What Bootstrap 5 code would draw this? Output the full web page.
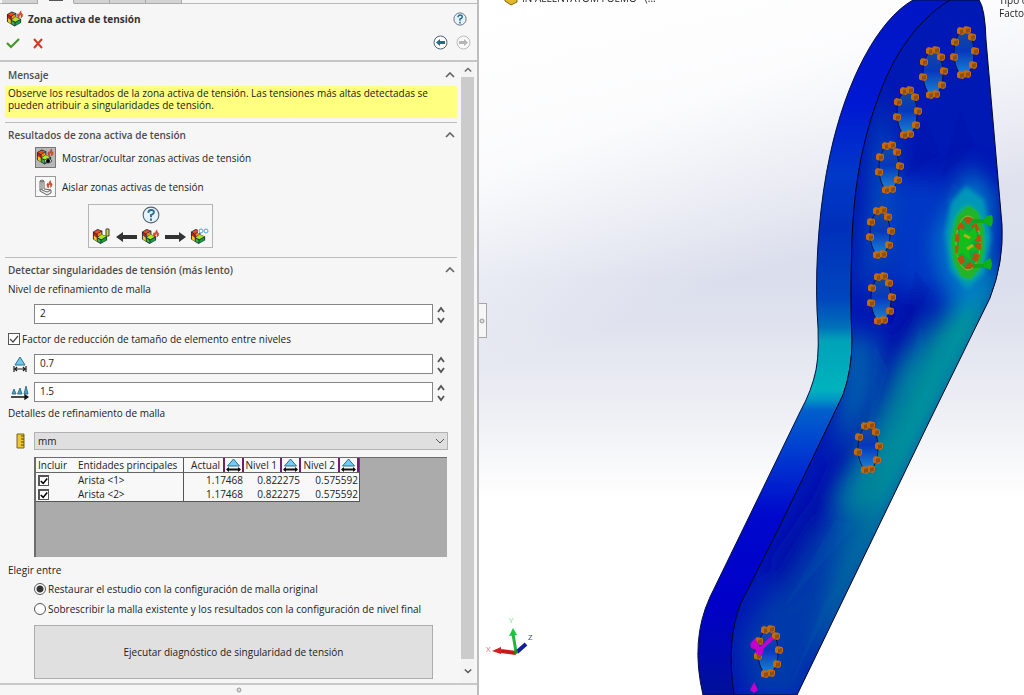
<!DOCTYPE html>
<html lang="es">
<head>
<meta charset="utf-8">
<meta name="viewport" content="width=device-width, initial-scale=1">
<title>Zona activa de tensión</title>
<link href="https://cdn.jsdelivr.net/npm/bootstrap@5.3.0/dist/css/bootstrap.min.css" rel="stylesheet">
<style>
body{font-family:"Open Sans","Noto Sans",sans-serif;font-size:10px;line-height:12px;color:#222;background:#f6f6f6}
.workspace{display:grid;grid-template-columns:minmax(0,479fr) minmax(0,545fr);height:100vh;min-height:695px;overflow:hidden}
.pm{background:#f6f6f6;border-right:2px solid #bdbdbd;min-width:0}
.tabstrip{height:4px;border-bottom:1px solid #b9b9b9;padding-left:2px}
.tabstrip span{width:36px;height:4px;background:#d3d3d3;border:solid #aaa;border-width:0 1px 1px 0}
.tabstrip span.sel{background:#f6f6f6;border-bottom-color:#f6f6f6}
.tabstrip span.sel::before{content:"";display:block;width:14px;height:1px;margin:0 auto;background:#555}
.pm-head{height:58px;border-bottom:2px solid #c6c6c6;padding:5px 2px 0 6px}
.pm-title{font-size:10px;line-height:20px;font-weight:700;margin:0;color:#333}
.pm-actions{padding-top:6px}
.bare{border:0;background:none;padding:0;line-height:0;display:inline-flex;align-items:center;justify-content:center}
.pm-body{flex:1 1 auto;min-height:0}
.pm-content{flex:1 1 auto;min-width:0;padding-left:5px}
.sec{border-top:1px solid #bcbcbc;padding:0 0 0 3px}
.sec.first{border-top:0}
.sec-title{height:24px;font-size:10px;line-height:12px;font-weight:600;color:#4c4c4c;margin:0;padding:0 2px 0 0}
.sec.first .sec-title{padding-top:2px}
.msg{background:#ffff80;margin:0 0 4px -3px;padding:1px 24px 7px 3px;color:#222}
.indent{padding-left:26px}
.tool{width:21px;height:21px;border:1px solid #999;background:#f9f9f9;margin:0 6px 0 1px}
.tool.on{background:#b7b7b7;border-color:#777}
.legendbox{width:125px;height:44px;border:1px solid #b5b5b5;margin:7px 0 9px 80px;padding:1px 3px 0}
.lbl{height:14px;line-height:14px}
.line{padding-right:9px}
.lead-ico{width:26px;flex:none;padding-right:2px}
.num{flex:1 1 auto;min-width:0;height:20px;border:1px solid #858585;border-radius:0;background:#fff;padding:0 5px 3px;font-size:10px;line-height:14px;color:#222}
.spin{width:14px;height:20px;flex:none;margin-left:1px}
.unit{height:18px;min-height:0;border:1px solid #b2b2b2;border-radius:0;background-color:#dfdfdf;padding:0 20px 0 3px;font-size:10px;line-height:15px;color:#222;
background-image:url("data:image/svg+xml,%3Csvg xmlns='http://www.w3.org/2000/svg' viewBox='0 0 10 10'%3E%3Cpath d='M1 3l4 4 4-4' fill='none' stroke='%23555'/%3E%3C/svg%3E");background-size:10px;background-position:right 2px center}
.gridrow{margin:7px 0 6px}
.gridbox{height:100px;background:#ababab;border:solid #6c6c6c;border-width:1px 0 0 2px;margin-right:10px}
.gridbox table{width:323px;table-layout:fixed;background:#f8f8f8;border-right:1px solid #555;border-bottom:1px solid #555;margin:0;border-collapse:separate;border-spacing:0}
.gridbox th,.gridbox td{height:14px;padding:0 3px;font-weight:400;line-height:14px;white-space:nowrap}
.gridbox th:first-child,.gridbox td:first-child{padding:0 2px}
.gridbox thead th{border-bottom:1px solid #666;padding-right:0;padding-left:0}
.gridbox .edge{border-right:1px solid #555}
.gridbox td.n{text-align:right;padding-right:1px}
.gridbox td:first-child{line-height:0}
.tri{width:21px;height:14px;border:solid #70206f;border-width:0 2px;margin-left:3px}
.sq{appearance:none;margin:0 2px 0 0;width:12px;height:12px;border:1px solid #555;background:#fff url("data:image/svg+xml,%3Csvg xmlns='http://www.w3.org/2000/svg' viewBox='0 0 10 10'%3E%3Cpath d='M1 5l3 3 5-6' fill='none' stroke='%23444' stroke-width='1.2'/%3E%3C/svg%3E") center/100% no-repeat}
.sq.bold{width:11px;height:11px;border-width:2px 1px 1px 2px;background-image:url("data:image/svg+xml,%3Csvg xmlns='http://www.w3.org/2000/svg' viewBox='0 0 10 10'%3E%3Cpath d='M1 5l3 3 5-6' fill='none' stroke='%23000' stroke-width='2'/%3E%3C/svg%3E")}
.rd{appearance:none;margin:0 2px 0 0;width:12px;height:12px;border:1px solid #555;border-radius:50%;background:#fff}
.rd:checked{background:radial-gradient(circle,#333 0 3px,#fff 4px)}
.opt{height:16px}
.run{height:54px;border:1px solid #adadad;border-radius:0;background:#e0e0e0;font-size:10px;line-height:12px;color:#222;padding:0}
.run:hover{background:#d6d6d6;color:#222}
.sbar{width:13px;flex:none;background:#cbcbcb;margin:0 3px 0 4px}
.sbar button{height:15px;background:#f4f4f4;width:13px}
.sbar button:last-child{height:24px}
.pm-foot{height:12px;border-top:2px solid #c9c9c9;line-height:0}
.view{position:relative;overflow:hidden;min-width:0;background:linear-gradient(160deg,#fff 0,rgba(255,255,255,.85) 20%,rgba(255,255,255,0) 42%),linear-gradient(#eff0f7 0,#e2e4ef 20%,#dadeec 40%,#dfe2ee 46%,#eff0f5 60%,#fff 72%)}
.view>svg{display:block;width:100%;height:100%}
.crumb{position:absolute;top:-8px;left:43px;font-size:10px;line-height:12px;white-space:nowrap}
.note{position:absolute;top:-6px;left:520px;font-size:10px;line-height:13px;white-space:nowrap}
.handle{position:absolute;top:303px;left:-1px;width:9px;height:35px;background:#f6f6f6;border:1px solid #a5a5a5;border-left:0}
</style>
<script src="https://cdn.jsdelivr.net/npm/bootstrap@5.3.0/dist/js/bootstrap.bundle.min.js"></script>
</head>
<body>
<svg width="0" height="0" class="position-absolute" aria-hidden="true">
<defs>
<symbol id="cube" viewBox="0 0 18 18">
<path d="M1 4l5-3 5 2v4l5 2v4l-7 4-8-5z" fill="#234"/>
<path d="M2 4l4-2 4 1-5 3z" fill="#f04a20"/><path d="M2 5l3 2v3l-3-2z" fill="#c91919"/>
<path d="M6 6l4-2v3L6 9z" fill="#f08a16"/><path d="M2 8l3 2v4l-3-2z" fill="#f0cc19"/>
<path d="M6 10l4-3 5 2-5 3z" fill="#a9e722"/><path d="M6 11l3 2v3l-3-2z" fill="#36b93c"/><path d="M10 13l5-3v3l-5 3z" fill="#15a040"/>
</symbol>
<symbol id="flame" viewBox="0 0 8 10"><path d="M2 9Q0 5 2 4l1 2q0-3 2-5 0 2 1 3l1 1q0 3-2 4 1-3-1-4Q3 6 3 9z" fill="#dc4b22" stroke="#a52d17" stroke-width=".5"/></symbol>
<symbol id="elem" viewBox="0 0 16 16"><path d="M8 1l5 8H3z" fill="#70c8ec" stroke="#337290"/><path d="M2 10v6M14 10v6M3 13h10M5 11l-2 2 2 2M11 11l2 2-2 2" fill="none" stroke="#222" stroke-width="1.200"/></symbol>
<symbol id="elemrow" viewBox="0 0 18 14"><path d="M1 9l2-5 2 5zM6.500 9l2.500-6 2 6zM13 9l2-8 2 8z" fill="#4da2c6" stroke="#24607d" stroke-width=".8"/><path d="M0 12h16M14 10l3 2-3 2z" fill="#111" stroke="#111" stroke-width="1.300"/></symbol>
<symbol id="ends" viewBox="0 0 17 14"><path d="M8.500 1l6 7h-12z" fill="#75ccef" stroke="#2b6e93"/><path d="M2 11.500h13" stroke="#111" stroke-width="2"/><path d="M4 9l-3 2.500L4 14zM13 9l3 2.500-3 2.500z" fill="#111"/></symbol>
<symbol id="up" viewBox="0 0 10 6"><path d="M1 5l4-4 4 4" fill="none" stroke="#666" stroke-width="1.700"/></symbol>
<symbol id="down" viewBox="0 0 10 6"><path d="M1 1l4 4 4-4" fill="none" stroke="#555" stroke-width="1.700"/></symbol>
<symbol id="spin" viewBox="0 0 14 20"><path d="M4 8l3-4 3 4M4 14l3 4 3-4" fill="none" stroke="#555" stroke-width="1.800"/></symbol>
<symbol id="help" viewBox="0 0 16 16"><circle cx="8" cy="8" r="7" fill="#e7f3fa" stroke="#566570"/><path d="M5.500 6Q6 3.500 8 3.500q3 0 2.500 2.500Q10 7.500 8 8v2M8 11v2" fill="none" stroke="#286b91" stroke-width="1.700"/></symbol>
</defs>
</svg>
<main class="workspace">
<section class="pm d-flex flex-column" aria-label="PropertyManager">
  <div class="tabstrip d-flex"><span></span><span class="sel"></span><span></span><span></span><span></span></div>
  <header class="pm-head">
    <div class="d-flex align-items-center justify-content-between">
      <div class="d-flex align-items-center gap-1"><svg width="18" height="18"><use href="#cube" width="17" height="18"/><use href="#flame" x="10" y="0" width="8" height="9"/></svg><h1 class="pm-title">Zona activa de tensión</h1></div>
      <button class="bare me-2" type="button" aria-label="Ayuda"><svg width="14" height="14"><use href="#help"/></svg></button>
    </div>
    <div class="pm-actions d-flex align-items-center">
      <button class="bare" type="button" aria-label="Aceptar"><svg width="15" height="14" viewBox="0 0 15 14"><path d="M1 7l4 4 8-8" fill="none" stroke="#46962c" stroke-width="2.200"/></svg></button>
      <button class="bare ms-2 ps-1" type="button" aria-label="Cancelar"><svg width="12" height="14" viewBox="0 0 12 14"><path d="M1 3l8 9M9 3l-8 9" stroke="#d03a22" stroke-width="2"/></svg></button>
      <button class="bare ms-auto" type="button" aria-label="Atrás"><svg width="15" height="15" viewBox="0 0 15 15"><circle cx="7.500" cy="7.500" r="6.500" fill="#fff" stroke="#4d6573"/><path d="M3 7.500L7 4v2h5v3H7v2z" fill="#236b8c"/></svg></button>
      <button class="bare ms-2 me-1" type="button" aria-label="Siguiente" disabled><svg width="15" height="15" viewBox="0 0 15 15"><circle cx="7.500" cy="7.500" r="6.500" fill="#fafafa" stroke="#bbb"/><path d="M12 7.500L8 4v2H3v3h5v2z" fill="#b5b5b5"/></svg></button>
    </div>
  </header>
  <div class="pm-body d-flex">
    <form class="pm-content">
      <section class="sec first">
        <h2 class="sec-title d-flex align-items-center justify-content-between">Mensaje<button class="bare" type="button" aria-label="Contraer"><svg width="10" height="6"><use href="#up"/></svg></button></h2>
        <p class="msg">Observe los resultados de la zona activa de tensión. Las tensiones más altas detectadas se<br>pueden atribuir a singularidades de tensión.</p>
      </section>
      <section class="sec">
        <h2 class="sec-title d-flex align-items-center justify-content-between">Resultados de zona activa de tensión<button class="bare" type="button" aria-label="Contraer"><svg width="10" height="6"><use href="#up"/></svg></button></h2>
        <div class="d-flex align-items-center indent mb-2"><button id="show" type="button" class="bare tool on" aria-labelledby="show-l"><svg width="19" height="19"><use href="#cube" width="17" height="18"/><use href="#flame" x="11" width="7" height="9"/><path d="M8 13q4-5 8 0-4 4-8 0" fill="#ddd" stroke="#555"/><circle cx="12" cy="13" r="2"/></svg></button><label id="show-l" for="show">Mostrar/ocultar zonas activas de tensión</label></div>
        <div class="d-flex align-items-center indent"><button id="iso" type="button" class="bare tool" aria-labelledby="iso-l"><svg width="19" height="19"><path d="M4 4q2-2 4 0v8l7 1v3l-4 2-7-4zM4 4l2 1 2-1M6 5v8l5 2 4-2M4 13l2-1" fill="#eee" stroke="#666"/><use href="#flame" x="10" y="2" width="7" height="10"/></svg></button><label id="iso-l" for="iso">Aislar zonas activas de tensión</label></div>
        <div class="legendbox d-flex flex-column">
          <svg class="mx-auto" width="18" height="18"><use href="#help"/></svg>
          <div class="d-flex align-items-center justify-content-between mt-auto">
            <svg width="19" height="20"><use href="#cube" y="1" width="17" height="17"/><path d="M14 2h3v7h-3z" fill="#c9d83a" stroke="#444"/></svg>
            <svg width="21" height="10"><path d="M0 5l7-5v3h14v4H7v3z" fill="#333"/></svg>
            <svg width="19" height="20"><use href="#cube" y="1" width="17" height="17"/><use href="#flame" x="11" y="2" width="8" height="9"/></svg>
            <svg width="21" height="10"><path d="M21 5l-7-5v3H0v4h14v3z" fill="#333"/></svg>
            <svg width="19" height="20"><use href="#cube" y="1" width="17" height="17"/><path d="M8 3h10v3H8z" fill="#fff"/><circle cx="11" cy="4" r="2" fill="none" stroke="#4e9fca"/><circle cx="16" cy="4" r="2" fill="none" stroke="#4e9fca"/></svg>
          </div>
        </div>
      </section>
      <section class="sec">
        <h2 class="sec-title d-flex align-items-center justify-content-between">Detectar singularidades de tensión (más lento)<button class="bare" type="button" aria-label="Contraer"><svg width="10" height="6"><use href="#up"/></svg></button></h2>
        <label class="lbl d-block mb-2" for="lvl">Nivel de refinamiento de malla</label>
        <div class="line d-flex"><span class="lead-ico"></span><input class="num" id="lvl" value="2"><svg class="spin"><use href="#spin"/></svg></div>
        <div class="d-flex align-items-center py-1"><input class="sq" type="checkbox" id="fac" checked><label class="lbl my-1" for="fac">Factor de reducción de tamaño de elemento entre niveles</label></div>
        <div class="line d-flex align-items-center mb-2"><span class="lead-ico text-center"><svg width="16" height="18"><use href="#elem"/></svg></span><input class="num" value="0.7" aria-label="Factor de tamaño"><svg class="spin"><use href="#spin"/></svg></div>
        <div class="line d-flex align-items-center mb-1"><span class="lead-ico text-center"><svg width="18" height="16"><use href="#elemrow"/></svg></span><input class="num" value="1.5" aria-label="Cociente de crecimiento"><svg class="spin"><use href="#spin"/></svg></div>
        <label class="lbl d-block mb-2" for="unit">Detalles de refinamiento de malla</label>
        <div class="line d-flex align-items-center pt-1"><span class="lead-ico text-center"><svg width="9" height="16" viewBox="0 0 9 16"><path d="M1 1h7v14H1z" fill="#edc72d" stroke="#7b651d"/><path d="M8 3H5M8 6H5M8 9H5M8 12H5" stroke="#554411"/></svg></span><select class="form-select unit" id="unit"><option>mm</option></select></div>
        <div class="gridrow d-flex"><span class="lead-ico"></span><div class="gridbox flex-grow-1">
          <table>
            <colgroup><col style="width:38px"><col style="width:110px"><col style="width:60px"><col style="width:57px"><col style="width:58px"></colgroup>
            <thead><tr><th>Incluir</th><th class="edge ps-1">Entidades principales</th>
            <th><div class="d-flex justify-content-end align-items-center">Actual<span class="tri d-flex"><svg width="17" height="14"><use href="#ends"/></svg></span></div></th>
            <th><div class="d-flex justify-content-end align-items-center">Nivel 1<span class="tri d-flex"><svg width="17" height="14"><use href="#ends"/></svg></span></div></th>
            <th><div class="d-flex justify-content-end align-items-center">Nivel 2<span class="tri d-flex"><svg width="17" height="14"><use href="#ends"/></svg></span></div></th></tr></thead>
            <tbody><tr><td><input class="sq bold" type="checkbox" checked aria-label="Incluir Arista 1"></td><td class="edge ps-1">Arista &lt;1&gt;</td><td class="n">1.17468</td><td class="n">0.822275</td><td class="n">0.575592</td></tr>
            <tr><td><input class="sq bold" type="checkbox" checked aria-label="Incluir Arista 2"></td><td class="edge ps-1">Arista &lt;2&gt;</td><td class="n">1.17468</td><td class="n">0.822275</td><td class="n">0.575592</td></tr></tbody>
          </table></div></div>
        <div class="lbl mb-1">Elegir entre</div>
        <div class="opt d-flex align-items-center indent mb-1"><input class="rd" type="radio" name="cfg" id="r1" checked><label class="lbl" for="r1">Restaurar el estudio con la configuración de malla original</label></div>
        <div class="opt d-flex align-items-center indent mb-2"><input class="rd" type="radio" name="cfg" id="r2"><label class="lbl" for="r2">Sobrescribir la malla existente y los resultados con la configuración de nivel final</label></div>
        <div class="line d-flex"><span class="lead-ico"></span><button type="button" class="btn run flex-grow-1">Ejecutar diagnóstico de singularidad de tensión</button><span class="spin"></span></div>
      </section>
    </form>
    <div class="sbar d-flex flex-column justify-content-between"><button class="bare" type="button" aria-label="Subir"><svg width="8" height="6"><use href="#up"/></svg></button><button class="bare" type="button" aria-label="Bajar"><svg width="8" height="6"><use href="#down"/></svg></button></div>
  </div>
  <footer class="pm-foot text-center"><svg width="8" height="8"><circle cx="4" cy="5" r="2" fill="#ddd" stroke="#999"/></svg></footer>
</section>
<section class="view" aria-label="Vista del modelo">
<svg viewBox="479 0 545 695" preserveAspectRatio="xMidYMin slice" aria-hidden="true">
<defs>
<filter id="soft" x="-50%" y="-50%" width="200%" height="200%"><feGaussianBlur stdDeviation="11"/></filter>
<filter id="soft2" x="-50%" y="-50%" width="200%" height="200%"><feGaussianBlur stdDeviation="2"/></filter>
<linearGradient id="side" gradientUnits="userSpaceOnUse" x1="0" y1="0" x2="0" y2="695">
<stop offset="0" stop-color="#0016c4"/><stop offset=".15" stop-color="#0018d2"/><stop offset=".25" stop-color="#0038c8"/><stop offset=".33" stop-color="#0030bb"/><stop offset=".43" stop-color="#0046bd"/><stop offset=".47" stop-color="#0070b8"/><stop offset=".49" stop-color="#00a2b8"/><stop offset=".56" stop-color="#00b3bd"/><stop offset=".575" stop-color="#0096c4"/><stop offset=".59" stop-color="#0060cc"/><stop offset=".65" stop-color="#003cd0"/><stop offset=".74" stop-color="#0008cc"/><stop offset=".87" stop-color="#0000c8"/><stop offset="1" stop-color="#001199"/></linearGradient>
<linearGradient id="hole" x1="0" y1="0" x2="0" y2="1"><stop offset="0" stop-color="#164a9a"/><stop offset=".45" stop-color="#0538bd"/><stop offset="1" stop-color="#1c85d2"/></linearGradient>
<path id="face" d="M950 0C912 24 890 62 876 104C860 150 854 192 852 240Q850 300 852 340Q852 370 843 395L780 526L741 603Q726 640 734 695H797L930 420L990 298Q1004 262 1002 225L986 40Q985 8 979 0z"/>
<clipPath id="faceclip"><use href="#face"/></clipPath>
<g id="cubelet"><path d="M-4-2l2-2 5 1 1 1v4l-2 2-5-1-1-1z" fill="#c0690f"/><path d="M-1-1l4-1v4l-4 1z" fill="#91500e"/></g>
<g id="cubes"><use href="#cubelet" x="-3" y="-22"/><use href="#cubelet" x="3" y="-23"/><use href="#cubelet" x="8" y="-16"/><use href="#cubelet" x="11" y="-2"/><use href="#cubelet" x="9" y="12"/><use href="#cubelet" x="3" y="21"/><use href="#cubelet" x="-3" y="22"/><use href="#cubelet" x="-10" y="4"/><use href="#cubelet" x="-9" y="-11"/></g>
<g id="ring"><ellipse rx="10" ry="22" fill="url(#hole)" stroke="#06133f"/><use href="#cubes"/></g>
</defs>
<path d="M913 0C878 20 846 80 830 155C820 200 815 260 817 310Q820 350 816 370Q812 390 800 412L710 597Q690 640 703 695H734Q726 640 741 603L780 526L843 395Q852 370 852 340Q850 300 852 240C854 192 860 150 876 104C890 62 912 24 950 0z" fill="url(#side)" stroke="#05103f"/>
<use href="#face" fill="#0018b4"/>
<g clip-path="url(#faceclip)">
<g filter="url(#soft)">
<path d="M1005 250L985 330L920 455L820 660L850 440L930 330z" fill="#009098" opacity=".9"/>
<path d="M1010 270L870 560L900 440L960 310z" fill="#00a0a0" opacity=".7"/>
<path d="M845 330L875 340L870 400L835 450z" fill="#0072ac" opacity=".8"/>
<path d="M890 180h55v110h-50z" fill="#0038c4"/>
<path d="M740 640L800 540L880 500L800 700h-50z" fill="#0048a5" opacity=".7"/>
<path d="M905 290L850 445L770 560L780 600L850 480L890 400L925 310z" fill="#0010a8"/>
<path d="M880 90L895 150L870 300L858 280z" fill="#0060bd" opacity=".6"/>
<path d="M968 165L1000 200L1000 235L985 300L950 310L938 240z" fill="#0078c8"/>
<ellipse cx="883" cy="210" rx="6" ry="80" fill="#0068c0" opacity=".6"/>
<path d="M990 190L1008 200L1005 260L988 280z" fill="#0010b0"/>
</g>
<path d="M875 345l-7 90 20-65zM920 325l-25 100 35-64zM895 470l-35 76 44-85zM835 520l-50 86 70-80zM940 340l-5 65 25-60zM825 600l-35 86 50-100zM952 183l-8 22 21-12z" fill="#0080b8" opacity=".1"/>
<path d="M925 118l-20 60 35-24zM960 110l-20 70 35-35zM930 290l-25 40 10-60z" fill="#000b98" opacity=".12"/>
<g filter="url(#soft2)"><path d="M966 186l18 14 7 38-7 36-17 16-17-20-5-36 6-32z" fill="#0096b8"/><ellipse cx="968" cy="243" rx="18" ry="38" fill="#10b078"/></g>
<path d="M968 206l9 5 6 16 1 22-5 20-9 10-9-3-8-16-1-23 5-20z" fill="#22b428"/>
</g>
<use href="#face" fill="none" stroke="#03082a"/>
<use href="#ring" x="964" y="53"/><use href="#ring" x="933" y="73"/><use href="#ring" x="907" y="113"/><use href="#ring" x="889" y="168"/><use href="#ring" x="880" y="233"/><use href="#ring" x="881" y="299"/><use href="#ring" x="868" y="448"/><use href="#ring" x="768" y="652"/>
<ellipse cx="968" cy="243" rx="12" ry="27" fill="#11a83f" stroke="#b5b01c" stroke-width="1"/><ellipse cx="968" cy="243" rx="10" ry="23" fill="none" stroke="#b8500f" stroke-width="6" stroke-dasharray="7 4"/>
<path d="M960 228l9 5 6-7 2 12-7 5 9 7-10 1 2 10-9-8-5 3 2-12z" fill="#12be1a"/><path d="M964 235l6 3M967 249l6-4" stroke="#a9b51a" stroke-width="3"/>
<path d="M973 221h12M973 266h12" stroke="#11a718" stroke-width="4"/><path d="M984 219l3-3 5-1q2 7-1 12l-7-4zM984 262l6-4q4 6 0 12l-6-3z" fill="#0eb01a"/>
<path d="M750 644l5-6 4 7v6l-8-3zM756 648l5-2 10-10 3 3-10 9-2 8-6-2z" fill="#c400c8"/><path d="M750 690l4-8 4 8-4 3z" fill="#c400c8"/>
<path d="M516 652l-3-18" stroke="#20b73c" stroke-width="3"/><path d="M509 636l4-8 4 7z" fill="#1ac83d"/><path d="M516 653l-15-2" stroke="#c81919" stroke-width="4"/><path d="M492 651l9-4v7z" fill="#d32020"/><path d="M517 652l9-8" stroke="#101f99" stroke-width="4"/><circle cx="516" cy="652" r="2" fill="#278a25"/>
<g font-family="Open Sans, sans-serif" font-size="8"><text x="509" y="623" fill="#74dc88">Y</text><text x="486" y="652" fill="#e46b72">X</text><text x="528" y="640" fill="#3942b5">Z</text></g>
<path d="M505-3l6-3 6 3v5l-6 3-6-4z" fill="#e2b827" stroke="#80651b"/>
</svg>
<div class="crumb">IN ALLENTATOM FOEMO* (...</div>
<div class="note">Tipo de resultado<br>Factor de escala</div>
<div class="handle d-flex align-items-center justify-content-center"><svg width="6" height="6"><circle cx="3" cy="3" r="2" fill="#ddd" stroke="#999"/></svg></div>
</section>
</main>
</body>
</html>
